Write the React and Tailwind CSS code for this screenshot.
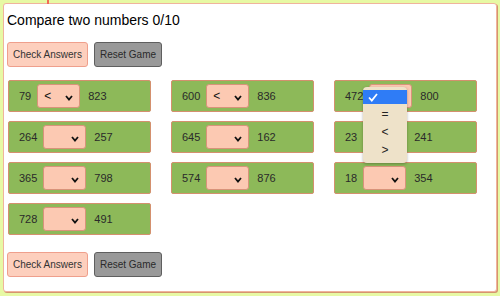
import React from "react";

const rows = [
  [["79", "<", "823"], ["600", "<", "836"], ["472", "", "800"]],
  [["264", "", "257"], ["645", "", "162"], ["23", "", "241"]],
  [["365", "", "798"], ["574", "", "876"], ["18", "", "354"]],
  [["728", "", "491"]],
];

function Chevron() {
  return (
    <svg width="8" height="6" viewBox="0 0 8 6" className="absolute right-[6px] top-[10px]">
      <polyline points="1,1 4,4.5 7,1" fill="none" stroke="#111" strokeWidth="1.8" />
    </svg>
  );
}

function Sel({ value }) {
  return (
    <div className="relative ml-[6px] mr-[8px] h-[24px] w-[43px] rounded-[3px] border border-[#d8937a] bg-[#fcc9b2]">
      <span className="absolute left-[6px] top-[4px] text-[12px] leading-[14px] text-[#111]">{value}</span>
      <Chevron />
    </div>
  );
}

function Cell({ a, op, b, menu }) {
  return (
    <div className="relative flex h-[32px] items-center rounded-[2px] border border-[#d4906e] bg-[#8db959] pl-[10px] text-[11px] text-[#2a2a2a]">
      <span>{a}</span>
      <Sel value={op} />
      <span>{b}</span>
      {menu && (
        <div className="absolute left-[28px] top-[6px] z-10 h-[76px] w-[44px] rounded-[4px] bg-[#eee2c9] pt-[3px] shadow-[0_1px_3px_rgba(0,0,0,0.3)]">
          <div className="flex h-[14px] items-center bg-[#2f7cf6] pl-[5px]">
            <svg width="10" height="9" viewBox="0 0 10 9">
              <polyline points="1,4.5 3.8,7.5 9,1" fill="none" stroke="#fff" strokeWidth="1.8" />
            </svg>
          </div>
          <div className="mt-[1px] flex flex-col items-center text-[12px] leading-[18px] text-[#222]">
            <span>=</span>
            <span>&lt;</span>
            <span>&gt;</span>
          </div>
        </div>
      )}
    </div>
  );
}

function Buttons() {
  return (
    <div className="flex gap-[6px]">
      <button className="h-[25px] rounded-[3px] border border-[#ef9f8c] bg-[#fdcfbd] px-[5px] text-[10px] text-[#333]">
        Check Answers
      </button>
      <button className="h-[25px] rounded-[3px] border border-[#5f5f5f] bg-[#999999] px-[5px] text-[10px] text-[#2a2a2a]">
        Reset Game
      </button>
    </div>
  );
}

export default function App() {
  return (
    <div
      className="relative h-[296px] w-[500px] bg-[#e7f9a4] p-[3px]"
      style={{ fontFamily: '"Liberation Sans", Arial, sans-serif' }}
    >
      <div className="absolute left-[47px] top-0 h-[4px] w-[2px] bg-[#f26b55]" />
      <div className="h-[289px] rounded-[3px] border border-[#f0b39c] bg-white px-[3px] pt-[6px] shadow-[1px_1px_0_#d4956f]">
        <div className="text-[14px] leading-[20px] text-black">Compare two numbers 0/10</div>
        <div className="mt-[12px]">
          <Buttons />
        </div>
        <div className="ml-[1px] mt-[13px] grid w-[469px] grid-cols-3 gap-x-[20px] gap-y-[9px]">
          {rows.flat().map((c, i) => (
            <Cell key={i} a={c[0]} op={c[1]} b={c[2]} menu={i === 2} />
          ))}
        </div>
        <div className="mt-[17px]">
          <Buttons />
        </div>
      </div>
    </div>
  );
}
